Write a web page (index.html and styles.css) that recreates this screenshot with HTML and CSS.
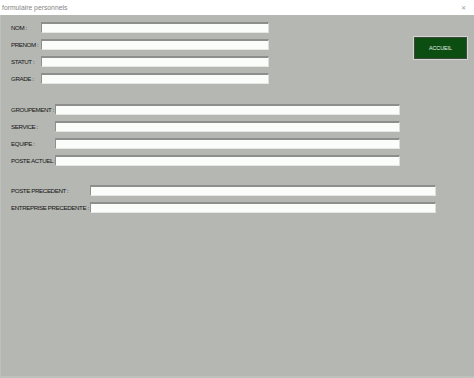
FILE: index.html
```html
<!DOCTYPE html>
<html lang="fr">
<head>
<meta charset="utf-8">
<title>formulaire personnels</title>
<link rel="stylesheet" href="styles.css">
</head>
<body>
<div class="window">
  <div class="titlebar">
    <span class="title">formulaire personnels</span>
    <span class="close">✕</span>
  </div>
  <div class="form">
    <div class="group g1">
      <div class="row"><label>NOM :</label><div class="field"></div></div>
      <div class="row"><label>PRENOM :</label><div class="field"></div></div>
      <div class="row"><label>STATUT :</label><div class="field"></div></div>
      <div class="row"><label>GRADE :</label><div class="field"></div></div>
    </div>
    <div class="group g2">
      <div class="row"><label>GROUPEMENT :</label><div class="field"></div></div>
      <div class="row"><label>SERVICE :</label><div class="field"></div></div>
      <div class="row"><label>EQUIPE :</label><div class="field"></div></div>
      <div class="row"><label>POSTE ACTUEL :</label><div class="field"></div></div>
    </div>
    <div class="group g3">
      <div class="row"><label>POSTE PRECEDENT :</label><div class="field"></div></div>
      <div class="row"><label>ENTREPRISE PRECEDENTE :</label><div class="field"></div></div>
    </div>
    <button class="accueil">ACCUEIL</button>
  </div>
</div>
</body>
</html>
```
FILE: styles.css
```css
* { box-sizing: border-box; }
html, body { margin: 0; padding: 0; }
body {
  width: 474px;
  height: 378px;
  background: #b5b7b3;
  font-family: "Liberation Sans", Arial, sans-serif;
  overflow: hidden;
}
.window {
  width: 474px;
  height: 378px;
  display: flex;
  flex-direction: column;
}
.titlebar {
  height: 15px;
  background: #ffffff;
  display: flex;
  align-items: center;
  justify-content: space-between;
  padding: 0 8px 1px 2px;
  flex: none;
}
.title {
  font-size: 6.8px;
  color: #858585;
}
.close {
  font-size: 6px;
  color: #9a9a9a;
  font-family: "DejaVu Sans", sans-serif;
}
.form {
  position: relative;
  flex: 1;
  padding: 7px 0 0 10px;
  display: flex;
  flex-direction: column;
  border-left: 1px solid #bfc1bd;
  border-bottom: 2px solid #bfc1bd;
}
.group {
  display: flex;
  flex-direction: column;
  gap: 6px;
}
.g2 { margin-top: 20px; }
.g3 { margin-top: 19px; }
.row {
  display: flex;
  align-items: center;
  height: 11px;
}
.row label {
  font-size: 6.2px;
  letter-spacing: -0.4px;
  color: #141414;
  white-space: nowrap;
  overflow: visible;
  flex: none;
}
.g1 label { width: 30px; }
.g2 label { width: 44px; }
.g3 label { width: 79px; }
.field {
  height: 11px;
  background: #fbfdfb;
  border-top: 2px solid #8e8f8d;
  border-left: 1px solid #8e8f8d;
  border-right: 1px solid #dcdedb;
  border-bottom: 1px solid #e6e8e5;
}
.g1 .field { width: 228px; }
.g2 .field { width: 345px; }
.g3 .field { width: 346px; }
.accueil {
  position: absolute;
  left: 413px;
  top: 22px;
  width: 53px;
  height: 22px;
  margin: 0;
  padding: 0;
  background: #0c4d12;
  border: 1px solid #3f4a3f;
  outline: 1px solid #d2d4d0;
  outline-offset: 0;
  box-shadow: inset 0 0 0 1px #0c4d12;
  color: #e8f0e8;
  font-family: "Liberation Sans", Arial, sans-serif;
  font-size: 5.3px;
}
```
